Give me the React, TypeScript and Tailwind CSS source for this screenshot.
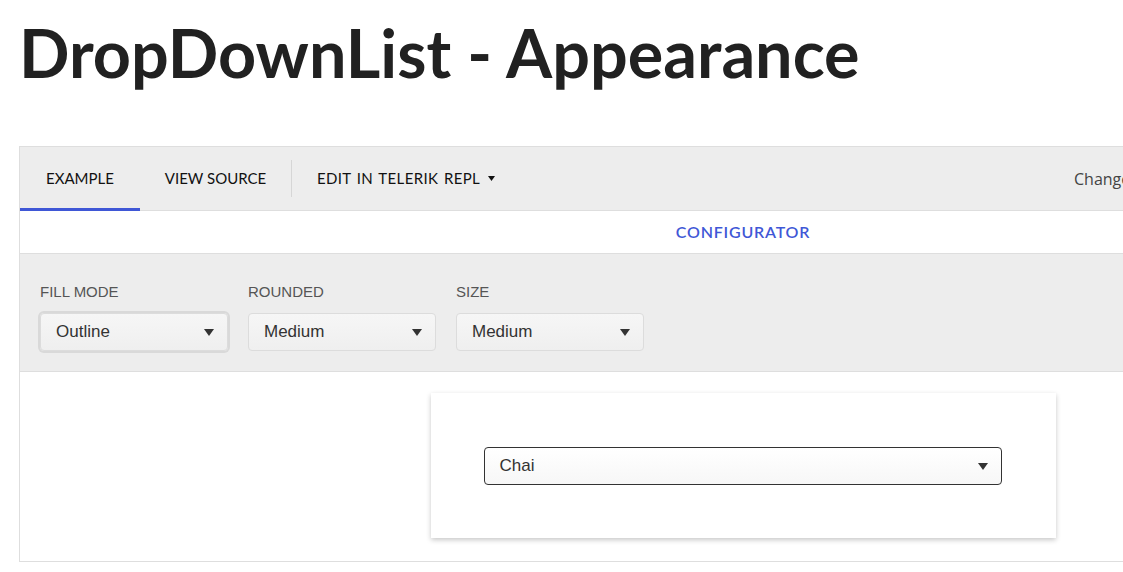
import React from "react";

function Caret({ className = "" }: { className?: string }) {
  return (
    <svg width="10" height="7" viewBox="0 0 10 7" className={className}>
      <path d="M0 0h10L5 7z" fill="currentColor" />
    </svg>
  );
}

function Select({ value, focused }: { value: string; focused?: boolean }) {
  return (
    <div
      className={
        "flex h-[38px] w-[188px] items-center justify-between rounded-[4px] border border-[#dcdcdc] bg-gradient-to-b from-[#f6f6f6] to-[#efefef] pl-[15px] pr-[13px] text-[17px] text-[#333] " +
        (focused ? "ring-2 ring-[#d9d9d9]" : "")
      }
    >
      <span>{value}</span>
      <Caret className="text-[#333]" />
    </div>
  );
}

export default function App() {
  const options = [
    { label: "FILL MODE", value: "Outline", focused: true },
    { label: "ROUNDED", value: "Medium" },
    { label: "SIZE", value: "Medium" },
  ];

  return (
    <div
      className="h-[572px] w-[1123px] overflow-hidden bg-white"
      style={{ fontFamily: "'Liberation Sans', Arial, sans-serif" }}
    >
      <h1
        className="ml-[19px] pt-[13px] text-[66.5px] font-bold leading-[78px] text-[#212121]"
        style={{ fontFamily: "Lato, sans-serif" }}
      >
        DropDownList - Appearance
      </h1>

      <div className="ml-[19px] mt-[55px] w-[1448px] border border-[#dedede]">
        {/* toolbar */}
        <div
          className="flex h-[64px] items-stretch border-b border-[#dedede] bg-[#ededed] text-[15px] text-[#111]"
          style={{ fontFamily: "Lato, sans-serif" }}
        >
          <div className="relative flex w-[120px] items-center justify-center">
            EXAMPLE
            <div className="absolute bottom-[-1px] left-0 right-0 h-[3px] bg-[#3f57d6]" />
          </div>
          <div className="flex w-[151px] items-center justify-center">VIEW SOURCE</div>
          <div className="my-[13px] w-px bg-[#d6d6d6]" />
          <div className="flex items-center gap-[8px] pl-[25px] tracking-[0.35px] [word-spacing:1.5px]">
            EDIT IN TELERIK REPL
            <Caret className="h-[5px] w-[7px] text-[#111]" />
          </div>
          <div
            className="ml-auto flex w-[392px] items-center text-[16px] text-[#444]"
            style={{ fontFamily: "'Open Sans', sans-serif" }}
          >
            Change Theme
          </div>
        </div>

        {/* configurator header */}
        <div
          className="flex h-[43px] items-center justify-center border-b border-[#dedede] text-[16px] font-semibold tracking-[0.8px] text-[#3f57d6]"
          style={{ fontFamily: "Lato, sans-serif" }}
        >
          CONFIGURATOR
        </div>

        {/* options */}
        <div className="flex gap-[20px] border-b border-[#dedede] bg-[#ededed] pb-[20px] pl-[20px] pt-[28px]">
          {options.map((o) => (
            <div key={o.label} className="flex flex-col gap-[11px]">
              <span className="text-[15px] leading-[20px] text-[#555]">{o.label}</span>
              <Select value={o.value} focused={o.focused} />
            </div>
          ))}
        </div>

        {/* demo */}
        <div className="flex justify-center pb-[23px] pt-[21px]">
          <div className="w-[625px] bg-white pb-[53px] pl-[53px] pt-[54px] shadow-[0_2px_5px_rgba(0,0,0,0.22)]">
            <div className="flex h-[38px] w-[518px] items-center justify-between rounded-[4px] border border-[#333] bg-gradient-to-b from-white to-[#f7f7f7] pl-[15px] pr-[13px] text-[17px] text-[#333]">
              <span>Chai</span>
              <Caret className="text-[#333]" />
            </div>
          </div>
        </div>
      </div>
    </div>
  );
}
